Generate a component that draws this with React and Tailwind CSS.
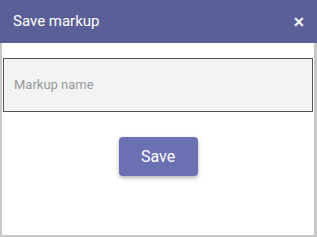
export default function App() {
  return (
    <div className="w-[317px] h-[237px] bg-[#c8c8c8] pl-[2px] pr-[3px] pb-[2px] flex flex-col" style={{ fontFamily: "Roboto, 'Liberation Sans', sans-serif" }}>
      <div className="flex-1 bg-white flex flex-col">
        <div className="h-[43px] bg-[#5b5f97] flex items-center justify-between pl-[13px] pr-[12px] ml-[-2px] mr-[-3px]">
          <span className="text-white text-[15px] leading-none">Save markup</span>
          <span className="text-white text-[14px] font-bold leading-none">✕</span>
        </div>
        <div className="pt-[15px] px-[1px]">
          <div className="h-[54px] bg-[#f2f4f3] border border-[#555] flex items-center pl-[10px]">
            <span className="text-[#9a9a9a] text-[13px]">Markup name</span>
          </div>
        </div>
        <div className="flex justify-center pt-[25px]">
          <button className="w-[79px] h-[39px] rounded-[4px] bg-[#6b70b2] text-white text-[16px] shadow-[0_2px_4px_rgba(0,0,0,0.3)]">Save</button>
        </div>
      </div>
    </div>
  );
}
